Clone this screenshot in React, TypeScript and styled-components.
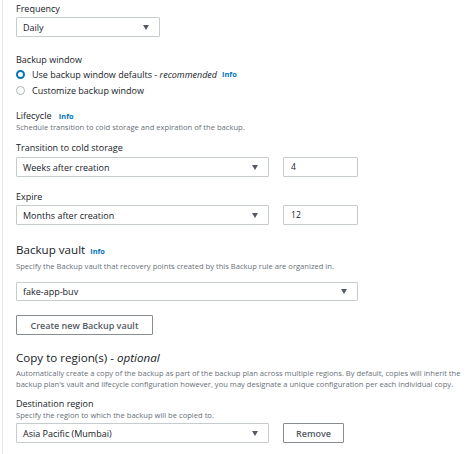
import React from 'react';
import styled, { createGlobalStyle } from 'styled-components';

const GlobalStyle = createGlobalStyle`
  body {
    margin: 0;
    background: #ffffff;
    font-family: "Open Sans", "Noto Sans", sans-serif;
    color: #16191f;
  }
`

const Page = styled.div`
  margin-left: 2px;
  border-left: 1px solid #e3e5e6;
  padding: 3px 0 12px 13px;
  min-height: 440px;
`

const Block = styled.div<{ $top?: number }>`
  margin-top: ${p => p.$top ?? 0}px;
`

const Label = styled.div`
  font-size: 9px;
  line-height: 12px;
  color: #16191f;
`

const Heading = styled.div`
  font-size: 11.6px;
  line-height: 16px;
  color: #16191f;
  em {
    font-style: italic;
  }
`

const InfoLink = styled.span`
  margin-left: 5px;
  font-size: 7.4px;
  font-weight: 700;
  color: #0073bb;
`

const Desc = styled.div<{ $top?: number }>`
  margin-top: ${p => p.$top ?? 0}px;
  font-size: 7.6px;
  line-height: 11px;
  color: #687078;
`

const Row = styled.div<{ $top?: number }>`
  display: flex;
  align-items: center;
  gap: 14px;
  margin-top: ${p => p.$top ?? 0}px;
`

const SelectBox = styled.div<{ $w: number; $h?: number }>`
  box-sizing: border-box;
  width: ${p => p.$w}px;
  height: ${p => p.$h ?? 20}px;
  border: 1px solid #c6cbcd;
  border-radius: 1px;
  background: #fff;
  display: flex;
  align-items: center;
  justify-content: space-between;
  padding: 0 10px 0 6px;
  font-size: 9px;
  color: #16191f;
`

const Caret = styled.span`
  width: 0;
  height: 0;
  border-left: 3.5px solid transparent;
  border-right: 3.5px solid transparent;
  border-top: 5px solid #545b64;
`

const TextInput = styled.div`
  box-sizing: border-box;
  width: 75px;
  height: 20px;
  border: 1px solid #c6cbcd;
  border-radius: 1px;
  display: flex;
  align-items: center;
  padding: 0 7px;
  font-size: 8.6px;
  color: #16191f;
`

const Button = styled.div<{ $w: number }>`
  box-sizing: border-box;
  width: ${p => p.$w}px;
  height: 20px;
  border: 1px solid #878c91;
  border-radius: 1px;
  display: flex;
  align-items: center;
  justify-content: center;
  font-size: 9px;
  font-weight: 600;
  color: #545b64;
`

const RadioRow = styled.div`
  display: flex;
  align-items: center;
  height: 16px;
  font-size: 9px;
  color: #16191f;
  em {
    font-style: italic;
  }
`

const Radio = styled.span<{ $on?: boolean }>`
  box-sizing: border-box;
  width: 9px;
  height: 9px;
  margin-right: 7px;
  border-radius: 50%;
  border: ${p => (p.$on ? '2.5px solid #0073bb' : '1px solid #aab7b8')};
  background: #fff;
`

export default function App() {
  return (
    <Page>
      <GlobalStyle />
      <Label>Frequency</Label>
      <Row $top={2}>
        <SelectBox $w={144}>Daily<Caret /></SelectBox>
      </Row>

      <Block $top={17}>
        <Label>Backup window</Label>
        <RadioRow>
          <Radio $on />
          <span>Use backup window defaults - <em>recommended</em></span>
          <InfoLink>Info</InfoLink>
        </RadioRow>
        <RadioRow>
          <Radio />
          <span>Customize backup window</span>
        </RadioRow>
      </Block>

      <Block $top={12}>
        <Label>Lifecycle <InfoLink>Info</InfoLink></Label>
        <Desc>Schedule transition to cold storage and expiration of the backup.</Desc>
      </Block>

      <Block $top={9}>
        <Label>Transition to cold storage</Label>
        <Row $top={3}>
          <SelectBox $w={253}>Weeks after creation<Caret /></SelectBox>
          <TextInput>4</TextInput>
        </Row>
      </Block>

      <Block $top={14}>
        <Label>Expire</Label>
        <Row $top={2}>
          <SelectBox $w={253}>Months after creation<Caret /></SelectBox>
          <TextInput>12</TextInput>
        </Row>
      </Block>

      <Block $top={17}>
        <Heading>Backup vault<InfoLink>Info</InfoLink></Heading>
        <Desc $top={2}>Specify the Backup vault that recovery points created by this Backup rule are organized in.</Desc>
        <Row $top={10}>
          <SelectBox $w={342} $h={19}>fake-app-buv<Caret /></SelectBox>
        </Row>
        <Row $top={14}>
          <Button $w={137}>Create new Backup vault</Button>
        </Row>
      </Block>

      <Block $top={15}>
        <Heading>Copy to region(s) - <em>optional</em></Heading>
        <Desc $top={2}>
          Automatically create a copy of the backup as part of the backup plan across multiple regions. By default, copies will inherit the backup plan's vault and lifecycle configuration however, you may designate a unique configuration per each individual copy.
        </Desc>
      </Block>

      <Block $top={8}>
        <Label>Destination region</Label>
        <Desc>Specify the region to which the backup will be copied to.</Desc>
        <Row $top={2}>
          <SelectBox $w={253}>Asia Pacific (Mumbai)<Caret /></SelectBox>
          <Button $w={61}>Remove</Button>
        </Row>
      </Block>
    </Page>
  );
}
